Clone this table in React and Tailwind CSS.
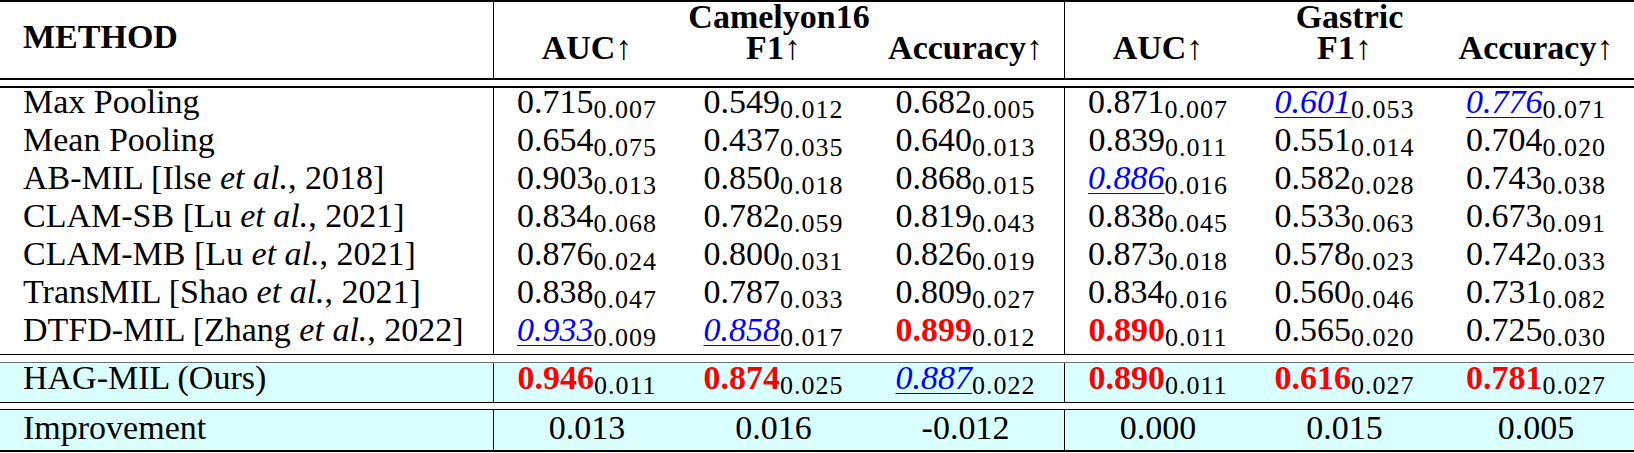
import React from 'react';

const cols = 'grid grid-cols-[493px_187px_187px_197px_187px_187px_196px]';

const rows = [
  { name: 'Max Pooling', cells: [['0.715', '0.007'], ['0.549', '0.012'], ['0.682', '0.005'], ['0.871', '0.007'], ['0.601', '0.053', 'u'], ['0.776', '0.071', 'u']] },
  { name: 'Mean Pooling', cells: [['0.654', '0.075'], ['0.437', '0.035'], ['0.640', '0.013'], ['0.839', '0.011'], ['0.551', '0.014'], ['0.704', '0.020']] },
  { name: 'AB-MIL [Ilse ', year: '2018]', cells: [['0.903', '0.013'], ['0.850', '0.018'], ['0.868', '0.015'], ['0.886', '0.016', 'u'], ['0.582', '0.028'], ['0.743', '0.038']] },
  { name: 'CLAM-SB [Lu ', year: '2021]', cells: [['0.834', '0.068'], ['0.782', '0.059'], ['0.819', '0.043'], ['0.838', '0.045'], ['0.533', '0.063'], ['0.673', '0.091']] },
  { name: 'CLAM-MB [Lu ', year: '2021]', cells: [['0.876', '0.024'], ['0.800', '0.031'], ['0.826', '0.019'], ['0.873', '0.018'], ['0.578', '0.023'], ['0.742', '0.033']] },
  { name: 'TransMIL [Shao ', year: '2021]', cells: [['0.838', '0.047'], ['0.787', '0.033'], ['0.809', '0.027'], ['0.834', '0.016'], ['0.560', '0.046'], ['0.731', '0.082']] },
  { name: 'DTFD-MIL [Zhang ', year: '2022]', cells: [['0.933', '0.009', 'u'], ['0.858', '0.017', 'u'], ['0.899', '0.012', 'b'], ['0.890', '0.011', 'b'], ['0.565', '0.020'], ['0.725', '0.030']] },
];

const ours = [['0.946', '0.011', 'b'], ['0.874', '0.025', 'b'], ['0.887', '0.022', 'u'], ['0.890', '0.011', 'b'], ['0.616', '0.027', 'b'], ['0.781', '0.027', 'b']];
const gains = ['0.013', '0.016', '-0.012', '0.000', '0.015', '0.005'];

// vertical rules sit before the first column of each dataset
const sep = (i) => (i === 0 || i === 3 ? 'border-l border-black' : '');

function Rule({ color = 'bg-black' }) {
  return <div className={`h-[1.5px] ${color}`} />;
}

function Value({ v, s, mark }) {
  let main = <span>{v}</span>;
  if (mark === 'b') main = <span className="font-bold text-[#ff0000]">{v}</span>;
  if (mark === 'u') main = <span className="italic text-[#0000ff] underline decoration-1 underline-offset-[4px]">{v}</span>;
  return (
    <span className="whitespace-nowrap">
      {main}
      <span className="text-[26px] tracking-[1px] leading-none align-[-5px]">{s}</span>
    </span>
  );
}

function Method({ row }) {
  if (!row.year) return <span>{row.name}</span>;
  return (
    <span className="whitespace-nowrap">
      {row.name}<i>et al.</i>, {row.year}
    </span>
  );
}

export default function App() {
  return (
    <div className="w-[1634px] h-[453px] bg-white text-black text-[34px] font-['Liberation_Serif','DejaVu_Serif',serif]">
      <Rule />

      {/* header */}
      <div className={`${cols} grid-rows-[31px_45.5px] font-bold`}>
        <div className="row-span-2 pl-[23px] pt-[18px] leading-[34px]">METHOD</div>
        <div className="col-span-3 border-l border-black text-center leading-[30px]">Camelyon16</div>
        <div className="col-span-3 border-l border-black text-center leading-[30px]">Gastric</div>
        {['AUC', 'F1', 'Accuracy', 'AUC', 'F1', 'Accuracy'].map((h, i) => (
          <div key={i} className={`text-center leading-[30px] ${sep(i)}`}>
            {h}<span className="font-normal">↑</span>
          </div>
        ))}
      </div>

      <Rule />
      <div className="h-[6.5px]" />
      <Rule />

      {/* baselines */}
      {rows.map((row) => (
        <div key={row.name} className={`${cols} h-[38.07px] leading-[27px]`}>
          <div className="pl-[23px]">
            <Method row={row} />
          </div>
          {row.cells.map((c, i) => (
            <div key={i} className={`text-center ${sep(i)}`}>
              <Value v={c[0]} s={c[1]} mark={c[2]} />
            </div>
          ))}
        </div>
      ))}

      <Rule />
      <div className="h-[6.5px]" />
      <Rule color="bg-[#6b7373]" />

      {/* ours */}
      <div className={`${cols} h-[38.5px] leading-[30px] bg-[#d9ffff]`}>
        <div className="pl-[23px]">HAG-MIL (Ours)</div>
        {ours.map((c, i) => (
          <div key={i} className={`text-center ${sep(i)}`}>
            <Value v={c[0]} s={c[1]} mark={c[2]} />
          </div>
        ))}
      </div>

      <Rule />
      <div className="h-[5.5px]" />
      <Rule />

      <div className={`${cols} h-[40px] leading-[36px] bg-[#d9ffff]`}>
        <div className="pl-[23px]">Improvement</div>
        {gains.map((g, i) => (
          <div key={i} className={`text-center ${sep(i)}`}>
            {g}
          </div>
        ))}
      </div>

      <Rule />
    </div>
  );
}
